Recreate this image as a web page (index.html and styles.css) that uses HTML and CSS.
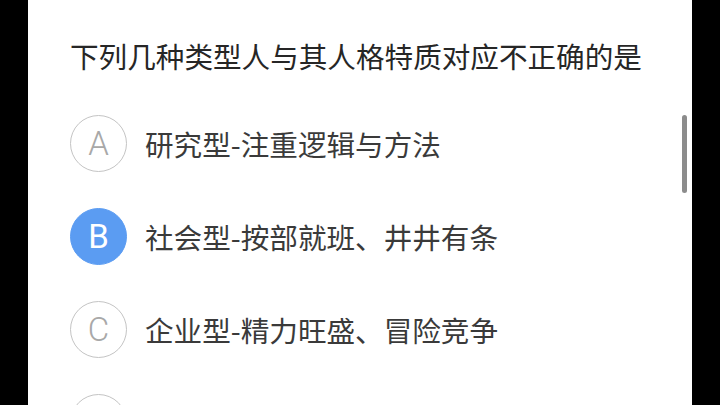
FILE: index.html
```html
<!DOCTYPE html>
<html lang="zh-CN">
<head>
<meta charset="utf-8">
<title>题目</title>
<link rel="stylesheet" href="styles.css">
</head>
<body>
<div class="screen">
  <main class="page">
    <h1 class="question">下列几种类型人与其人格特质对应不正确的是</h1>
    <ul class="options">
      <li class="option"><span class="badge">A</span><span class="label">研究型-注重逻辑与方法</span></li>
      <li class="option selected"><span class="badge">B</span><span class="label">社会型-按部就班、井井有条</span></li>
      <li class="option"><span class="badge">C</span><span class="label">企业型-精力旺盛、冒险竞争</span></li>
      <li class="option"><span class="badge"></span></li>
    </ul>
    <div class="scrollbar"></div>
  </main>
</div>
</body>
</html>
```
FILE: styles.css
```css
html, body {
  margin: 0;
  padding: 0;
  width: 720px;
  height: 405px;
  overflow: hidden;
  background: #000;
}
.screen {
  display: flex;
  height: 405px;
  padding: 0 28px;
  box-sizing: border-box;
}
.page {
  position: relative;
  flex: 1;
  background: #fff;
  padding: 36px 0 0 42px;
  overflow: hidden;
  font-family: "Noto Sans CJK SC", "Noto Sans", sans-serif;
}
.question {
  margin: 0;
  font-size: 28.6px;
  line-height: 40px;
  font-weight: 400;
  color: #262626;
  white-space: nowrap;
}
.options {
  list-style: none;
  margin: 39px 0 0;
  padding: 0;
  display: flex;
  flex-direction: column;
  gap: 36px;
}
.option {
  display: flex;
  align-items: center;
  height: 57px;
  gap: 18px;
}
.badge {
  flex: none;
  width: 57px;
  height: 57px;
  box-sizing: border-box;
  border: 1.5px solid #c4c4c4;
  border-radius: 50%;
  display: flex;
  align-items: center;
  justify-content: center;
  font-family: Roboto, "Noto Sans", sans-serif;
  font-size: 33px;
  font-weight: 300;
  color: #a8a8a8;
  line-height: 1;
}
.selected .badge {
  background: #5b9cf2;
  border-color: #5b9cf2;
  color: #fff;
  font-weight: 400;
}
.label {
  font-size: 28.6px;
  line-height: 40px;
  color: #3a3a3a;
  white-space: nowrap;
}
.scrollbar {
  position: absolute;
  left: 654px;
  top: 115px;
  width: 5px;
  height: 78px;
  border-radius: 3px;
  background: #8c8c8c;
}
```
